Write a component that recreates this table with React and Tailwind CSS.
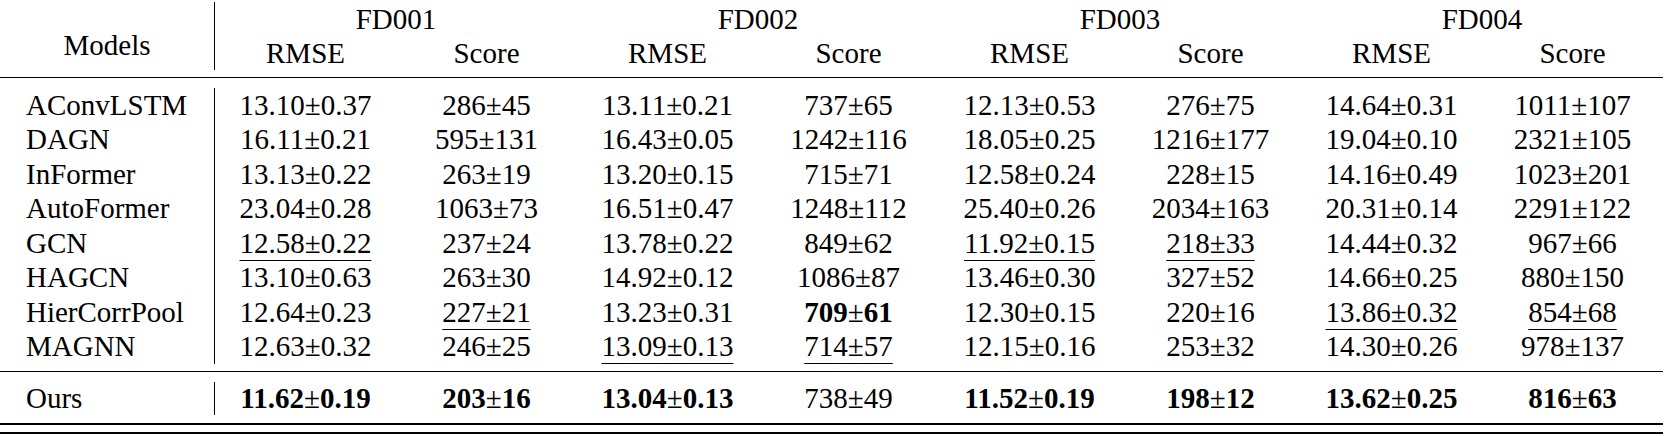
import React from 'react';

const cols = ['FD001', 'FD002', 'FD003', 'FD004'];

// "_" = underlined (second best), "*" = bold (best)
const rows = [
  ['AConvLSTM', ['13.10±0.37', '286±45', '13.11±0.21', '737±65', '12.13±0.53', '276±75', '14.64±0.31', '1011±107']],
  ['DAGN', ['16.11±0.21', '595±131', '16.43±0.05', '1242±116', '18.05±0.25', '1216±177', '19.04±0.10', '2321±105']],
  ['InFormer', ['13.13±0.22', '263±19', '13.20±0.15', '715±71', '12.58±0.24', '228±15', '14.16±0.49', '1023±201']],
  ['AutoFormer', ['23.04±0.28', '1063±73', '16.51±0.47', '1248±112', '25.40±0.26', '2034±163', '20.31±0.14', '2291±122']],
  ['GCN', ['_12.58±0.22', '237±24', '13.78±0.22', '849±62', '_11.92±0.15', '_218±33', '14.44±0.32', '967±66']],
  ['HAGCN', ['13.10±0.63', '263±30', '14.92±0.12', '1086±87', '13.46±0.30', '327±52', '14.66±0.25', '880±150']],
  ['HierCorrPool', ['12.64±0.23', '_227±21', '13.23±0.31', '*709±61', '12.30±0.15', '220±16', '_13.86±0.32', '_854±68']],
  ['MAGNN', ['12.63±0.32', '246±25', '_13.09±0.13', '_714±57', '12.15±0.16', '253±32', '14.30±0.26', '978±137']],
];

const ours = ['*11.62±0.19', '*203±16', '*13.04±0.13', '738±49', '*11.52±0.19', '*198±12', '*13.62±0.25', '*816±63'];

const grid = 'grid grid-cols-[215px_repeat(8,181px)]';

const Value = ({ raw }) => {
  const mark = raw[0];
  const text = mark === '_' || mark === '*' ? raw.slice(1) : raw;
  const [a, b] = text.split('±');
  if (mark === '*') {
    return (
      <span className="font-bold">
        {a}
        <span className="font-normal">±</span>
        {b}
      </span>
    );
  }
  if (mark === '_') {
    return <span className="underline decoration-1 underline-offset-[7px]">{text}</span>;
  }
  return <span>{text}</span>;
};

const Row = ({ name, values, height }) => (
  <div className={grid} style={{ height }}>
    <div className="flex items-center pl-[26px] border-r border-black">{name}</div>
    {values.map((v, i) => (
      <div key={i} className="flex items-center justify-center whitespace-nowrap">
        <Value raw={v} />
      </div>
    ))}
  </div>
);

export default function App() {
  return (
    <div className="w-[1668px] h-[436px] bg-white text-black overflow-hidden font-['Liberation_Serif',serif] text-[29px] leading-none">
      <div className="w-[1663px]">
        {/* header */}
        <div className="pt-[2px] pb-[7px]">
          <div className={`${grid} grid-rows-[34px_34px]`}>
            <div className="row-span-2 flex items-center justify-center pt-[18px] border-r border-black">Models</div>
            {cols.map((c) => (
              <div key={c} className="col-span-2 flex items-center justify-center">{c}</div>
            ))}
            {cols.map((c) => (
              <React.Fragment key={c}>
                <div className="flex items-center justify-center">RMSE</div>
                <div className="flex items-center justify-center">Score</div>
              </React.Fragment>
            ))}
          </div>
        </div>
        <div className="h-px bg-black" />

        {/* body */}
        <div className="pt-[10px] pb-[7px]">
          {rows.map(([name, values]) => (
            <Row key={name} name={name} values={values} height={34.5} />
          ))}
        </div>
        <div className="h-px bg-black" />

        <div className="pt-[10px] pb-[8px]">
          <Row name="Ours" values={ours} height={33} />
        </div>
        <div className="h-[2px] bg-black" />
        <div className="h-[7px]" />
        <div className="h-[2px] bg-black" />
      </div>
    </div>
  );
}
